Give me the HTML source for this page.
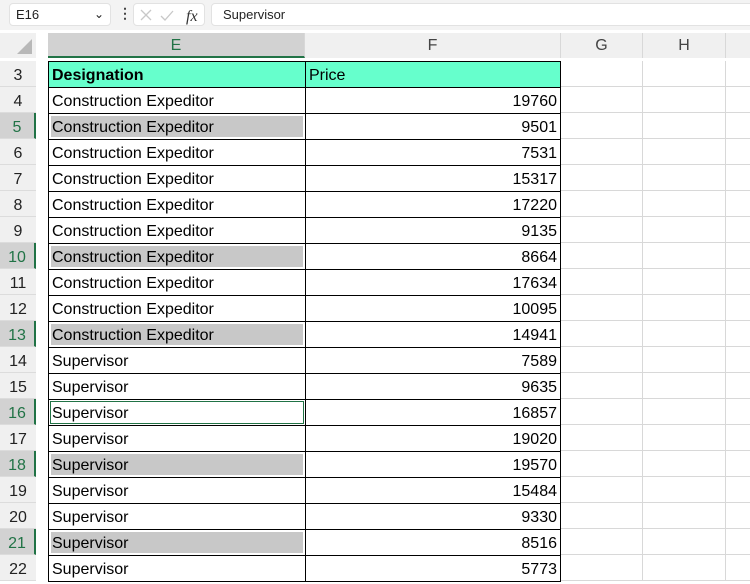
<!DOCTYPE html>
<html><head><meta charset="utf-8"><style>
*{margin:0;padding:0;box-sizing:border-box}
body{width:750px;height:583px;overflow:hidden;background:#fff;font-family:"Liberation Sans",Arial,sans-serif;position:relative}
.a{position:absolute}
.fb{left:0;top:0;width:750px;height:30px;background:#f3f3f3}
.box{background:#fff;border:1px solid #e2e2e2;border-radius:4px}
.ch{top:33px;height:25px;background:#f0f0f0;border-right:1px solid #d8d8d8;color:#444;font-size:16px;text-align:center;line-height:26px}
.rh{left:0;width:36px;height:26px;background:#f0f0f0;border-bottom:1px solid #dcdcdc;font-size:16px;color:#222;text-align:center;line-height:29px}
.rh.s{background:#d2d2d2;color:#217346;border-right:2px solid #217346}
.e{left:48px;width:258px;height:27px;border:1px solid #000;font-size:16px;line-height:28px;padding-left:3px;color:#000}
.f{left:305px;width:256px;height:27px;border:1px solid #000;font-size:16px;line-height:28px;padding-right:3px;text-align:right;color:#000}
.g{height:26px;border-right:1px solid #d8d8d8;border-bottom:1px solid #d8d8d8}
.hl{position:absolute;left:2px;top:2px;right:2px;bottom:2px;background:#c8c8c8}
.t{position:relative}
</style></head><body>
<div class="a fb"></div>
<div class="a box" style="left:9px;top:3px;width:102px;height:23px;font-size:13px;line-height:21px;padding-left:6px;color:#222">E16<span style="position:absolute;right:6px;top:0;font-size:12px">&#8964;</span></div>
<div class="a" style="left:118px;top:5px;font-size:14px;color:#444;font-weight:bold">&#8942;</div>
<div class="a box" style="left:133px;top:3px;width:72px;height:23px">
<svg width="72" height="23"><path d="M7 6l10 10M17 6L7 16" stroke="#c8c8c8" stroke-width="1.3" fill="none"/><path d="M27 12l4 4 8-9" stroke="#c8c8c8" stroke-width="1.3" fill="none"/><text x="52" y="17" font-family="Liberation Serif" font-style="italic" font-size="16" fill="#333">fx</text></svg></div>
<div class="a box" style="left:211px;top:3px;width:545px;height:23px;font-size:13px;line-height:21px;padding-left:11px;color:#222">Supervisor</div>
<div class="a" style="left:0;top:30px;width:750px;height:553px;background:#fff"></div>
<div class="a" style="left:0;top:33px;width:36px;height:25px;background:#f0f0f0"></div>
<svg class="a" style="left:14px;top:37px" width="20" height="18"><path d="M18 2V17H3Z" fill="#b8b8b8"/></svg>
<div class="a ch" style="left:48px;width:257px;background:#d2d2d2;color:#217346;border-bottom:2px solid #217346">E</div>
<div class="a ch" style="left:305px;width:256px">F</div>
<div class="a ch" style="left:561px;width:82px">G</div>
<div class="a ch" style="left:643px;width:83px">H</div>
<div class="a ch" style="left:726px;width:30px"></div>
<div id="rows"></div>
<script>
var d=[["Designation","Price"],["Construction Expeditor",19760],["Construction Expeditor",9501],["Construction Expeditor",7531],["Construction Expeditor",15317],["Construction Expeditor",17220],["Construction Expeditor",9135],["Construction Expeditor",8664],["Construction Expeditor",17634],["Construction Expeditor",10095],["Construction Expeditor",14941],["Supervisor",7589],["Supervisor",9635],["Supervisor",16857],["Supervisor",19020],["Supervisor",19570],["Supervisor",15484],["Supervisor",9330],["Supervisor",8516],["Supervisor",5773]];
var hl=[5,10,13,18,21],sel=[5,10,13,16,18,21],h="";
for(var i=0;i<d.length;i++){var r=i+3,y=61+i*26;
h+='<div class="a rh'+(sel.indexOf(r)>=0?' s':'')+'" style="top:'+y+'px">'+r+'</div>';
var bg=i==0?'background:#66ffcc;':'';
var inner=hl.indexOf(r)>=0?'<div class="hl"></div>':'';
if(r==16)inner='<div style="position:absolute;left:1px;top:1px;right:1px;bottom:1px;border:1px solid #217346"></div>';
h+='<div class="a e" style="top:'+y+'px;'+bg+(i==0?'font-weight:bold;':'')+'">'+inner+'<span class="t">'+d[i][0]+'</span></div>';
h+='<div class="a f" style="top:'+y+'px;'+bg+(i==0?'text-align:left;padding-left:3px;':'')+'">'+d[i][1]+'</div>';
h+='<div class="a g" style="left:561px;width:82px;top:'+y+'px"></div><div class="a g" style="left:643px;width:83px;top:'+y+'px"></div><div class="a g" style="left:726px;width:30px;top:'+y+'px"></div>';}
document.getElementById('rows').innerHTML=h;
</script>
</body></html>
